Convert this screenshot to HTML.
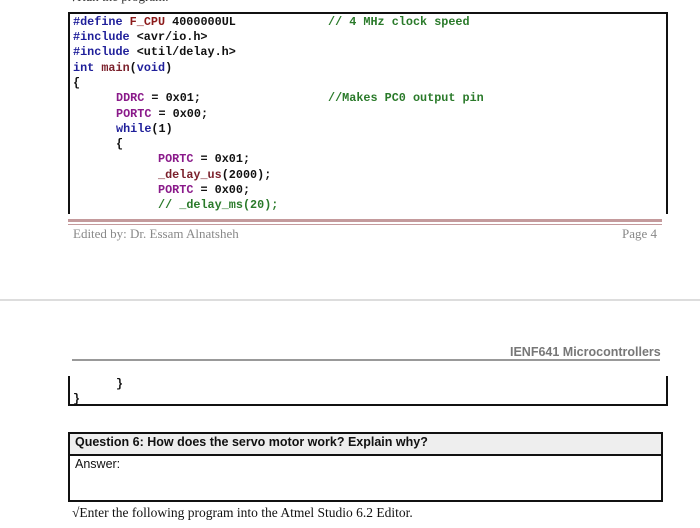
<!DOCTYPE html>
<html><head><meta charset="utf-8"><style>
body{margin:0;width:700px;height:528px;background:#fff;position:relative;overflow:hidden;font-family:"Liberation Sans",sans-serif}
.a{position:absolute;white-space:pre}
.c{font-family:"Liberation Mono",monospace;font-weight:bold;font-size:11.8px;color:#111}
.k{color:#1f1f9a}.m{color:#8b1a1a}.p{color:#8a1a8a}.g{color:#2a7a2a}.r{color:#7a1f2a}
</style></head><body>
<div class="a" style="left:70px;top:-11px;font-family:'Liberation Serif',serif;font-size:13px;color:#333">√Run the program.</div>
<div class="a" style="left:68px;top:12px;width:596px;height:200px;border:2px solid #111;border-bottom:none"></div>
<div class="a c" style="left:73px;top:15px"><span class="k">#define</span> <span class="m">F_CPU</span> 4000000UL</div>
<div class="a c" style="left:73px;top:30px"><span class="k">#include</span> &lt;avr/io.h&gt;</div>
<div class="a c" style="left:73px;top:45px"><span class="k">#include</span> &lt;util/delay.h&gt;</div>
<div class="a c" style="left:73px;top:61px"><span class="k">int</span> <span class="r">main</span>(<span class="k">void</span>)</div>
<div class="a c" style="left:73px;top:76px">{</div>
<div class="a c" style="left:116px;top:91px"><span class="p">DDRC</span> = 0x01;</div>
<div class="a c" style="left:116px;top:107px"><span class="p">PORTC</span> = 0x00;</div>
<div class="a c" style="left:116px;top:122px"><span class="k">while</span>(1)</div>
<div class="a c" style="left:116px;top:137px">{</div>
<div class="a c" style="left:158px;top:152px"><span class="p">PORTC</span> = 0x01;</div>
<div class="a c" style="left:158px;top:168px"><span class="r">_delay_us</span>(2000);</div>
<div class="a c" style="left:158px;top:183px"><span class="p">PORTC</span> = 0x00;</div>
<div class="a c g" style="left:158px;top:198px">// _delay_ms(20);</div>
<div class="a c g" style="left:328px;top:15px">// 4 MHz clock speed</div>
<div class="a c g" style="left:328px;top:91px">//Makes PC0 output pin</div>
<div class="a" style="left:68px;top:219px;width:594px;height:3px;background:#c49a9c"></div>
<div class="a" style="left:68px;top:224px;width:594px;height:1px;background:#c49a9c"></div>
<div class="a" style="left:73px;top:226px;font-family:'Liberation Serif',serif;font-size:13px;color:#888">Edited by: Dr. Essam Alnatsheh</div>
<div class="a" style="left:622px;top:226px;font-family:'Liberation Serif',serif;font-size:13px;color:#888">Page 4</div>
<div class="a" style="left:0;top:299px;width:700px;height:2px;background:#ddd"></div>
<div class="a" style="left:510px;top:345px;font-size:12.5px;color:#777;font-weight:bold">IENF641 Microcontrollers</div>
<div class="a" style="left:72px;top:359px;width:588px;height:2px;background:#999"></div>
<div class="a" style="left:68px;top:376px;width:596px;height:28px;border:2px solid #111;border-top:none"></div>
<div class="a c" style="left:116px;top:377px">}</div>
<div class="a c" style="left:73px;top:392px">}</div>
<div class="a" style="left:68px;top:432px;width:595px;height:70px;border:2px solid #111;box-sizing:border-box"></div>
<div class="a" style="left:70px;top:434px;width:591px;height:20px;background:#eee;border-bottom:2px solid #111"></div>
<div class="a" style="left:75px;top:435px;font-size:12.5px;font-weight:bold;color:#111">Question 6: How does the servo motor work? Explain why?</div>
<div class="a" style="left:75px;top:457px;font-size:12.5px;color:#111">Answer:</div>
<div class="a" style="left:72px;top:505px;font-family:'Liberation Serif',serif;font-size:13.5px;color:#111">√Enter the following program into the Atmel Studio 6.2 Editor.</div>
</body></html>
